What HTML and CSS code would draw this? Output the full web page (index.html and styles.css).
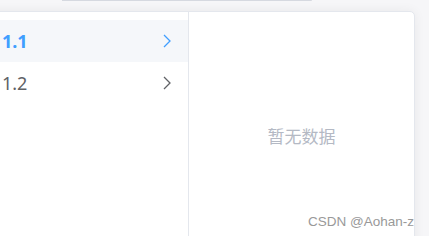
FILE: index.html
```html
<!DOCTYPE html>
<html lang="zh-CN">
<head>
    <meta charset="UTF-8">
    <title>Cascader</title>
    <link rel="stylesheet" href="styles.css">
</head>
<body>
    <div class="top-input"></div>
    <div class="cascader-panel">
        <ul class="menu">
            <li class="node active">
                <span class="label">1.1</span>
                <svg class="arrow" viewBox="0 0 8 14" width="8" height="14"><polyline points="1,1 7,7 1,13" /></svg>
            </li>
            <li class="node">
                <span class="label">1.2</span>
                <svg class="arrow" viewBox="0 0 8 14" width="8" height="14"><polyline points="1,1 7,7 1,13" /></svg>
            </li>
        </ul>
        <div class="empty">暂无数据</div>
    </div>
    <div class="watermark">CSDN @Aohan-z</div>
</body>
</html>
```

FILE: styles.css
```css
html, body {
    margin: 0;
    padding: 0;
}
body {
    width: 429px;
    height: 236px;
    overflow: hidden;
    position: relative;
    background: #f6f6f8;
    font-family: "Noto Sans", "Noto Sans CJK SC", sans-serif;
}
.top-input {
    margin-left: 62px;
    width: 250px;
    height: 1px;
    background: #d6d9e0;
    border-bottom-right-radius: 2px;
}
.cascader-panel {
    display: flex;
    margin-top: 10px;
    margin-left: -24px;
    width: 437px;
    height: 246px;
    background: #fff;
    border: 1px solid #e4e7ed;
    border-radius: 5px;
    box-shadow: 0 0 12px rgba(0, 0, 0, 0.06);
}
.menu {
    list-style: none;
    margin: 0;
    padding: 8px 0;
    width: 211px;
    border-right: 1px solid #e4e7ed;
}
.node {
    display: flex;
    align-items: center;
    justify-content: space-between;
    height: 42px;
    padding: 0 17px 0 25px;
    font-size: 18px;
    color: #606266;
}
.node.active {
    background: #f5f7fa;
    color: #409eff;
    font-weight: bold;
}
.arrow {
    fill: none;
    stroke: currentColor;
    stroke-width: 1.3;
}
.empty {
    flex: 1;
    display: flex;
    align-items: center;
    justify-content: center;
    font-size: 17px;
    color: #b4b9c4;
}
.watermark {
    position: absolute;
    right: 15px;
    bottom: 7px;
    font-family: "Liberation Sans", sans-serif;
    font-size: 13.5px;
    color: #999;
}
```
